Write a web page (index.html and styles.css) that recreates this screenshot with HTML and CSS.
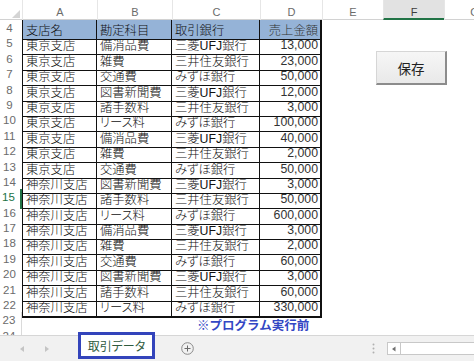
FILE: index.html
```html
<!DOCTYPE html>
<html lang="ja">
<head>
    <meta charset="UTF-8">
    <title>取引データ</title>
    <link rel="stylesheet" href="styles.css">
</head>
<body>
    <div class="window">
        <div class="sheet">
            <div class="row head">
                <div class="corner"><svg width="8" height="8" viewBox="0 0 8 8"><polygon points="8,0 8,8 0,8" fill="#d4d4d4"/></svg></div>
                <div class="col">A</div>
                <div class="col">B</div>
                <div class="col">C</div>
                <div class="col">D</div>
                <div class="col">E</div>
                <div class="col sel">F</div>
                <div class="col">G</div>
            </div>
            <div class="row data">
                <div class="num">4</div><div class="c a th">支店名</div><div class="c th">勘定科目</div><div class="c th">取引銀行</div><div class="c d th">売上金額</div>
            </div>
            <div class="row data">
                <div class="num">5</div><div class="c a">東京支店</div><div class="c">備消品費</div><div class="c">三菱UFJ銀行</div><div class="c d">13,000</div>
            </div>
            <div class="row data">
                <div class="num">6</div><div class="c a">東京支店</div><div class="c">雑費</div><div class="c">三井住友銀行</div><div class="c d">23,000</div>
            </div>
            <div class="row data">
                <div class="num">7</div><div class="c a">東京支店</div><div class="c">交通費</div><div class="c">みずほ銀行</div><div class="c d">50,000</div>
            </div>
            <div class="row data">
                <div class="num">8</div><div class="c a">東京支店</div><div class="c">図書新聞費</div><div class="c">三菱UFJ銀行</div><div class="c d">12,000</div>
            </div>
            <div class="row data">
                <div class="num">9</div><div class="c a">東京支店</div><div class="c">諸手数料</div><div class="c">三井住友銀行</div><div class="c d">3,000</div>
            </div>
            <div class="row data">
                <div class="num">10</div><div class="c a">東京支店</div><div class="c">リース料</div><div class="c">みずほ銀行</div><div class="c d">100,000</div>
            </div>
            <div class="row data">
                <div class="num">11</div><div class="c a">東京支店</div><div class="c">備消品費</div><div class="c">三菱UFJ銀行</div><div class="c d">40,000</div>
            </div>
            <div class="row data">
                <div class="num">12</div><div class="c a">東京支店</div><div class="c">雑費</div><div class="c">三井住友銀行</div><div class="c d">2,000</div>
            </div>
            <div class="row data">
                <div class="num">13</div><div class="c a">東京支店</div><div class="c">交通費</div><div class="c">みずほ銀行</div><div class="c d">50,000</div>
            </div>
            <div class="row data">
                <div class="num">14</div><div class="c a">神奈川支店</div><div class="c">図書新聞費</div><div class="c">三菱UFJ銀行</div><div class="c d">3,000</div>
            </div>
            <div class="row data">
                <div class="num active">15</div><div class="c a">神奈川支店</div><div class="c">諸手数料</div><div class="c">三井住友銀行</div><div class="c d">50,000</div>
            </div>
            <div class="row data">
                <div class="num">16</div><div class="c a">神奈川支店</div><div class="c">リース料</div><div class="c">みずほ銀行</div><div class="c d">600,000</div>
            </div>
            <div class="row data">
                <div class="num">17</div><div class="c a">神奈川支店</div><div class="c">備消品費</div><div class="c">三菱UFJ銀行</div><div class="c d">3,000</div>
            </div>
            <div class="row data">
                <div class="num">18</div><div class="c a">神奈川支店</div><div class="c">雑費</div><div class="c">三井住友銀行</div><div class="c d">2,000</div>
            </div>
            <div class="row data">
                <div class="num">19</div><div class="c a">神奈川支店</div><div class="c">交通費</div><div class="c">みずほ銀行</div><div class="c d">60,000</div>
            </div>
            <div class="row data">
                <div class="num">20</div><div class="c a">神奈川支店</div><div class="c">図書新聞費</div><div class="c">三菱UFJ銀行</div><div class="c d">3,000</div>
            </div>
            <div class="row data">
                <div class="num">21</div><div class="c a">神奈川支店</div><div class="c">諸手数料</div><div class="c">三井住友銀行</div><div class="c d">60,000</div>
            </div>
            <div class="row data last">
                <div class="num">22</div><div class="c a">神奈川支店</div><div class="c">リース料</div><div class="c">みずほ銀行</div><div class="c d">330,000</div>
            </div>
            <div class="row">
                <div class="num empty">23</div><div class="note">※プログラム実行前</div>
            </div>
            <div class="row">
                <div class="num empty">24</div>
            </div>

            <button class="save">保存</button>
        </div>

        <div class="tabbar">
            <div class="tabnav">
                <svg width="8" height="8" viewBox="0 0 8 8"><polygon points="6,1 6,7 2,4" fill="#c4c4c4"/></svg>
                <svg width="8" height="8" viewBox="0 0 8 8"><polygon points="2,1 2,7 6,4" fill="#c4c4c4"/></svg>
            </div>
            <div class="tab">取引データ</div>
            <div class="addsheet">
                <svg width="13" height="13" viewBox="0 0 13 13"><circle cx="6.5" cy="6.5" r="5.8" fill="none" stroke="#8a8a8a" stroke-width="1"/><path d="M6.5 3.5v6M3.5 6.5h6" stroke="#6a6a6a" stroke-width="1"/></svg>
            </div>
            <div class="spacer"></div>
            <div class="dots">
                <svg width="3" height="11" viewBox="0 0 3 11"><circle cx="1.5" cy="1.5" r="1" fill="#b0b0b0"/><circle cx="1.5" cy="5.5" r="1" fill="#b0b0b0"/><circle cx="1.5" cy="9.5" r="1" fill="#b0b0b0"/></svg>
            </div>
            <div class="hscroll">
                <div class="hbtn"><svg width="6" height="6" viewBox="0 0 6 6"><polygon points="4.5,0.5 4.5,5.5 1,3" fill="#707070"/></svg></div>
                <div class="thumb"></div>
            </div>
        </div>
    </div>
</body>
</html>
```

FILE: styles.css
```css
* {
    box-sizing: border-box;
}
body {
    margin: 0;
    background: #fff;
    font-family: "Liberation Sans", "Noto Sans CJK JP", sans-serif;
    overflow: hidden;
}
.window {
    width: 474px;
    height: 361px;
    display: flex;
    flex-direction: column;
}
.sheet {
    position: relative;
    height: 335px;
    overflow: hidden;
}
.row {
    display: grid;
    grid-template-columns: 22px 75px 75px 88px 62px 61px 61px 60px;
    height: 15.4px;
}
.row.head {
    height: 20px;
    border-bottom: 1px solid #d2d2d2;
}
.corner {
    display: flex;
    justify-content: flex-end;
    align-items: flex-end;
    padding: 0 2px 2px 0;
}
.col {
    color: #6b6b6b;
    font-size: 11px;
    text-align: center;
    padding-top: 6px;
    border-left: 1px solid #e6e6e6;
}
.col.sel {
    background: #e2e2e2;
    color: #3d3d3d;
    border-bottom: 2px solid #217346;
}
.num {
    color: #6b6b6b;
    font-size: 11.5px;
    text-align: center;
    padding-right: 3px;
    line-height: 16px;
}
.num.empty {
    border-right: 1px solid #dadada;
}
.num.active {
    color: #217346;
    border-right: 2px solid #217346;
}
.c {
    display: flex;
    align-items: center;
    padding: 1px 3px 0;
    font-size: 12.3px;
    font-weight: 300;
    color: #111;
    white-space: nowrap;
    font-feature-settings: "palt";
    border-right: 1px solid #111;
    border-bottom: 1px solid #111;
}
.c.a {
    border-left: 1px solid #111;
}
.c.d {
    justify-content: flex-end;
    border-right-width: 2px;
    padding-right: 2px;
    color: #333;
}
.c.th {
    background: #95b3d7;
}
.last .c {
    border-bottom-width: 2px;
}
.note {
    grid-column: 4 / 6;
    padding: 7px 0 0 25px;
    color: #3347c4;
    font-weight: bold;
    font-size: 12.5px;
    white-space: nowrap;
    line-height: 15px;
}
.save {
    position: absolute;
    left: 376px;
    top: 51px;
    width: 71px;
    height: 34px;
    font-family: "Noto Sans CJK JP", sans-serif;
    font-size: 13.5px;
    color: #222;
    background: linear-gradient(#f6f6f6, #e9e9e9);
    border: 1px solid #d6d6d6;
    border-right: 2px solid #8c8c8c;
    border-bottom: 2px solid #8c8c8c;
    padding: 0;
}
.tabbar {
    height: 26px;
    background: #f1f1f1;
    border-top: 1px solid #d6d6d6;
    display: flex;
    align-items: center;
}
.tabnav {
    display: flex;
    width: 78px;
    padding-left: 18px;
    gap: 17px;
}
.tab {
    align-self: flex-start;
    margin-top: -4px;
    width: 77px;
    height: 27px;
    border: 3px solid #3344bb;
    background: #fff;
    color: #2f5b3e;
    font-family: "Noto Sans CJK JP", sans-serif;
    font-size: 12px;
    font-feature-settings: "palt";
    display: flex;
    justify-content: center;
    align-items: center;
}
.addsheet {
    margin-left: 26px;
    display: flex;
}
.spacer {
    flex: 1;
}
.dots {
    display: flex;
    margin-right: 12px;
}
.hscroll {
    width: 88px;
    height: 13px;
    margin-right: -1px;
    display: flex;
    border: 1px solid #c8c8c8;
    background: #fff;
}
.hbtn {
    width: 13px;
    display: flex;
    justify-content: center;
    align-items: center;
    border-right: 1px solid #c8c8c8;
}
.thumb {
    flex: 1;
}
```
